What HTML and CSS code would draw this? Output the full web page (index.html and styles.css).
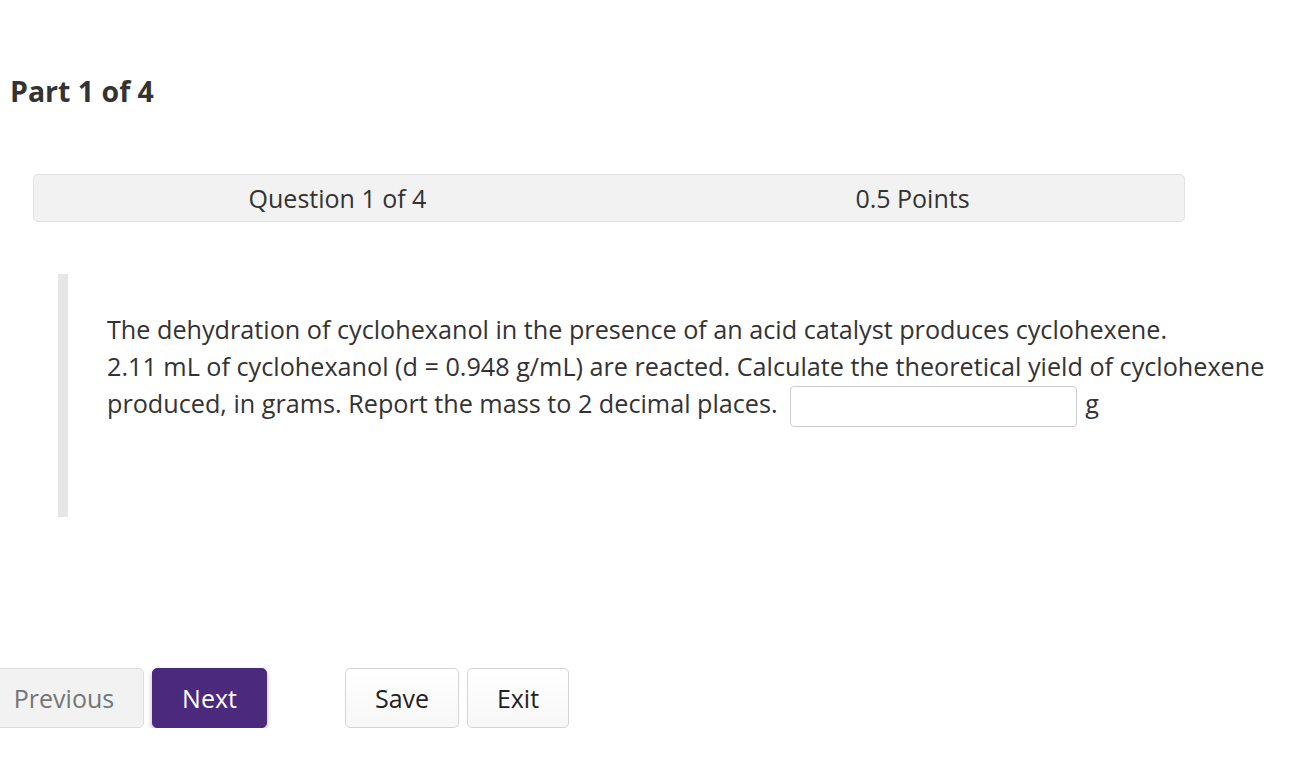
FILE: index.html
```html
<!DOCTYPE html>
<html lang="en">
<head>
    <meta charset="UTF-8">
    <title>Part 1 of 4</title>
    <link rel="stylesheet" href="styles.css">
</head>
<body>
    <h2 class="part-title">Part 1 of 4</h2>

    <div class="q-header">
        <div class="q-cell">Question 1 of 4</div>
        <div class="q-cell">0.5 Points</div>
    </div>

    <div class="question">
        <p class="q-text">The dehydration of cyclohexanol in the presence of an acid catalyst produces cyclohexene.<br>2.11 mL of cyclohexanol (d = 0.948 g/mL) are reacted. Calculate the theoretical yield of cyclohexene produced, in grams. Report the mass to 2 decimal places. <input type="text" class="answer"><span class="unit">g</span></p>
    </div>

    <div class="nav-buttons">
        <button class="btn btn-prev">Previous</button>
        <button class="btn btn-next">Next</button>
        <button class="btn btn-plain btn-save">Save</button>
        <button class="btn btn-plain">Exit</button>
    </div>
</body>
</html>
```

FILE: styles.css
```css
body { font-family: "Open Sans", Arial, sans-serif; margin: 0; padding: 0; color: #333; background: #fff; }

.part-title {
    font-size: 28.5px;
    font-weight: 700;
    margin: 0;
    padding: 74px 0 0 10px;
    line-height: 34px;
}

.q-header {
    display: grid;
    grid-template-columns: 1fr 1fr;
    width: 1150px;
    margin: 66px 0 0 33px;
    background-color: #f2f2f2;
    border: 1px solid #e2e2e2;
    border-radius: 5px;
    height: 46px;
    align-items: center;
    font-size: 25px;
}
.q-cell {
    text-align: center;
    padding-left: 32px;
}

.question {
    margin: 52px 0 0 58px;
    border-left: 10px solid #e6e6e6;
    height: 243px;
    padding-left: 39px;
    box-sizing: border-box;
    padding-top: 37px;
}
.q-text {
    margin: 0;
    font-size: 25.2px;
    line-height: 37px;
    width: 1185px;
}
.answer {
    width: 287px;
    height: 41px;
    box-sizing: border-box;
    border: 1px solid #ccc;
    border-radius: 4px;
    vertical-align: middle;
    margin: 0 0 0 6px;
    font-size: 20px;
    font-family: inherit;
}
.unit {
    margin-left: 8px;
}

.nav-buttons {
    display: flex;
    margin: 151px 0 0 -16px;
    gap: 8px;
}
.btn {
    font-family: "Open Sans", Arial, sans-serif;
    font-size: 25px;
    height: 60px;
    border-radius: 5px;
    padding: 0 10px;
    cursor: pointer;
}
.btn-prev {
    width: 160px;
    background-color: #f2f2f2;
    border: 1px solid #ddd;
    color: #757575;
}
.btn-next {
    width: 115px;
    background-color: #4b2a7e;
    border: 1px solid #4b2a7e;
    color: #fff;
    box-shadow: 0 3px 5px rgba(0, 0, 0, 0.3);
}
.btn-plain {
    background: linear-gradient(#fff, #f7f7f7);
    border: 1px solid #d4d4d4;
    color: #222;
}
.btn-save {
    width: 114px;
    margin-left: 70px;
}
.btn-plain + .btn-plain {
    width: 102px;
}
```
